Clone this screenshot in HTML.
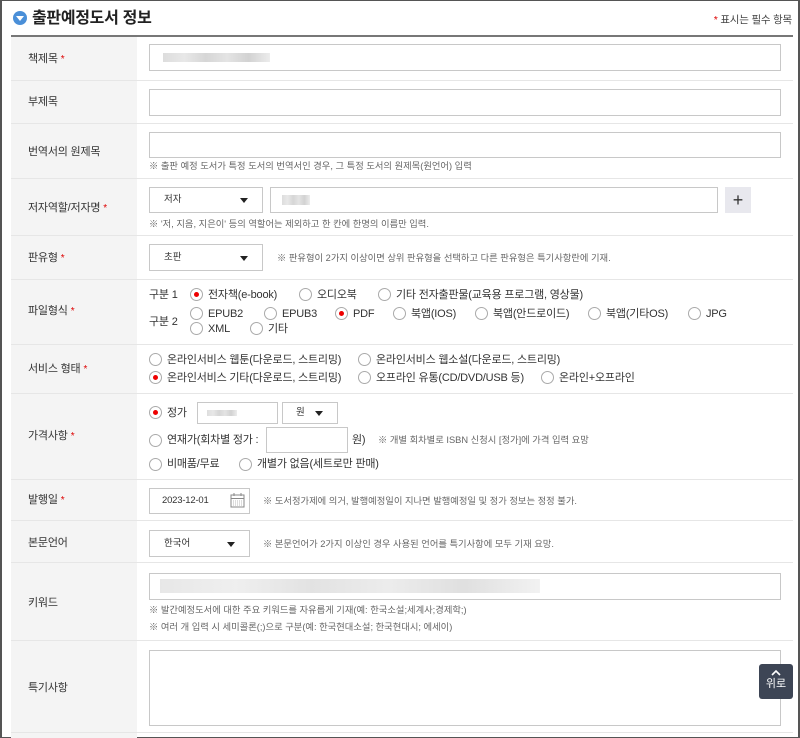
<!DOCTYPE html>
<html><head><meta charset="utf-8"><style>
*{margin:0;padding:0;box-sizing:border-box}
body{width:800px;height:738px;overflow:hidden;background:#fff;font-family:"Liberation Sans","Noto Sans CJK KR",sans-serif;color:#333;position:relative}
.a{position:absolute}
.t{position:absolute;line-height:16px;white-space:nowrap;font-size:11px;letter-spacing:-0.2px;color:#333}
.n{position:absolute;line-height:14px;white-space:nowrap;font-size:9.3px;color:#666}
.lb{position:absolute;left:28px;line-height:16px;font-size:11px;letter-spacing:-0.2px;color:#333;white-space:nowrap}
.lb i{color:#d00;font-style:normal;font-size:10px;margin-left:3px}
.in{position:absolute;border:1px solid #c8c8c8;background:#fff}
.sel{position:absolute;border:1px solid #c8c8c8;background:#fff;font-size:9.5px;line-height:24px;padding-left:14px;color:#333}
.sel:after{content:"";position:absolute;right:14px;top:50%;margin-top:-2px;border-left:4px solid transparent;border-right:4px solid transparent;border-top:5px solid #222}
.r{position:absolute;width:13px;height:13px;border:1px solid #aaa;border-radius:50%;background:#fff}
.r.c:after{content:"";position:absolute;left:3px;top:3px;width:5px;height:5px;border-radius:50%;background:#e00}
.row{position:absolute;left:11px;width:782px;border-bottom:1px solid #e6e6e6}
.blur{position:absolute;background:linear-gradient(90deg,#ddd,#e8e8e8,#d6d6d6,#e4e4e4,#d2d2d2,#ececec);}
</style></head><body>
<div class="a" style="left:0;top:0;width:800px;height:738px;border:1px solid #555;border-left-width:2px;border-right-width:2px"></div>
<div class="a" style="left:13px;top:11px;width:14px;height:14px;border-radius:50%;background:#4a8fd8"></div>
<div class="a" style="left:16px;top:16px;border-left:4px solid transparent;border-right:4px solid transparent;border-top:5px solid #fff"></div>
<div class="t" style="left:32px;top:9px;font-size:16px;line-height:20px;color:#222;font-weight:bold;letter-spacing:-0.3px">출판예정도서 정보</div>
<div class="t" style="right:8px;top:12px;font-size:10.5px;color:#444"><span style="color:#d00">*</span> 표시는 필수 항목</div>
<div class="a" style="left:11px;top:35px;width:782px;height:2px;background:#777"></div>
<div class="a" style="left:11px;top:37px;width:126px;height:701px;background:#f4f4f4"></div>
<div class="row" style="top:37px;height:44px"></div>
<div class="row" style="top:81px;height:43px"></div>
<div class="row" style="top:124px;height:55px"></div>
<div class="row" style="top:179px;height:57px"></div>
<div class="row" style="top:236px;height:44px"></div>
<div class="row" style="top:280px;height:65px"></div>
<div class="row" style="top:345px;height:49px"></div>
<div class="row" style="top:394px;height:86px"></div>
<div class="row" style="top:480px;height:41px"></div>
<div class="row" style="top:521px;height:42px"></div>
<div class="row" style="top:563px;height:78px"></div>
<div class="lb" style="top:51px">책제목<i>*</i></div>
<div class="lb" style="top:94px">부제목</div>
<div class="lb" style="top:144px">번역서의 원제목</div>
<div class="lb" style="top:200px">저자역할/저자명<i>*</i></div>
<div class="lb" style="top:250px">판유형<i>*</i></div>
<div class="lb" style="top:303px">파일형식<i>*</i></div>
<div class="lb" style="top:361px">서비스 형태<i>*</i></div>
<div class="lb" style="top:428px">가격사항<i>*</i></div>
<div class="lb" style="top:492px">발행일<i>*</i></div>
<div class="lb" style="top:535px">본문언어</div>
<div class="lb" style="top:595px">키워드</div>
<div class="lb" style="top:680px">특기사항</div>
<div class="in" style="left:149px;top:44px;width:632px;height:27px"></div>
<div class="blur" style="left:163px;top:53px;width:107px;height:9px"></div>
<div class="in" style="left:149px;top:89px;width:632px;height:27px"></div>
<div class="in" style="left:149px;top:132px;width:632px;height:26px"></div>
<div class="n" style="left:149px;top:159px">※ 출판 예정 도서가 특정 도서의 번역서인 경우, 그 특정 도서의 원제목(원언어) 입력</div>
<div class="sel" style="left:149px;top:187px;width:114px;height:26px">저자</div>
<div class="in" style="left:270px;top:187px;width:448px;height:26px"></div>
<div class="blur" style="left:282px;top:195px;width:28px;height:10px"></div>
<div class="a" style="left:725px;top:187px;width:26px;height:26px;background:#e8e8ee;text-align:center;line-height:26px;font-size:18px;color:#333">+</div>
<div class="n" style="left:149px;top:217px">※ '저, 지음, 지은이' 등의 역할어는 제외하고 한 칸에 한명의 이름만 입력.</div>
<div class="sel" style="left:149px;top:244px;width:114px;height:27px;line-height:25px">초판</div>
<div class="n" style="left:277px;top:251px">※ 판유형이 2가지 이상이면 상위 판유형을 선택하고 다른 판유형은 특기사항란에 기재.</div>
<div class="t" style="left:149px;top:287px">구분 1</div>
<div class="r c" style="left:190px;top:288px"></div><div class="t" style="left:208px;top:287px">전자책(e-book)</div>
<div class="r" style="left:299px;top:288px"></div><div class="t" style="left:317px;top:287px">오디오북</div>
<div class="r" style="left:378px;top:288px"></div><div class="t" style="left:396px;top:287px">기타 전자출판물(교육용 프로그램, 영상물)</div>
<div class="t" style="left:149px;top:314px">구분 2</div>
<div class="r" style="left:190px;top:307px"></div><div class="t" style="left:208px;top:306px">EPUB2</div>
<div class="r" style="left:264px;top:307px"></div><div class="t" style="left:282px;top:306px">EPUB3</div>
<div class="r c" style="left:335px;top:307px"></div><div class="t" style="left:353px;top:306px">PDF</div>
<div class="r" style="left:393px;top:307px"></div><div class="t" style="left:411px;top:306px">북앱(IOS)</div>
<div class="r" style="left:475px;top:307px"></div><div class="t" style="left:493px;top:306px">북앱(안드로이드)</div>
<div class="r" style="left:588px;top:307px"></div><div class="t" style="left:606px;top:306px">북앱(기타OS)</div>
<div class="r" style="left:688px;top:307px"></div><div class="t" style="left:706px;top:306px">JPG</div>
<div class="r" style="left:190px;top:322px"></div><div class="t" style="left:208px;top:321px">XML</div>
<div class="r" style="left:250px;top:322px"></div><div class="t" style="left:268px;top:321px">기타</div>
<div class="r" style="left:149px;top:353px"></div><div class="t" style="left:167px;top:352px">온라인서비스 웹툰(다운로드, 스트리밍)</div>
<div class="r" style="left:358px;top:353px"></div><div class="t" style="left:376px;top:352px">온라인서비스 웹소설(다운로드, 스트리밍)</div>
<div class="r c" style="left:149px;top:371px"></div><div class="t" style="left:167px;top:370px">온라인서비스 기타(다운로드, 스트리밍)</div>
<div class="r" style="left:358px;top:371px"></div><div class="t" style="left:376px;top:370px">오프라인 유통(CD/DVD/USB 등)</div>
<div class="r" style="left:541px;top:371px"></div><div class="t" style="left:559px;top:370px">온라인+오프라인</div>
<div class="r c" style="left:149px;top:406px"></div><div class="t" style="left:167px;top:405px">정가</div>
<div class="in" style="left:197px;top:402px;width:81px;height:22px"></div>
<div class="blur" style="left:207px;top:410px;width:30px;height:6px"></div>
<div class="sel" style="left:282px;top:402px;width:56px;height:22px;line-height:20px;padding-left:13px">원</div>
<div class="r" style="left:149px;top:434px"></div><div class="t" style="left:167px;top:432px">연재가(회차별 정가 :</div>
<div class="in" style="left:266px;top:427px;width:82px;height:26px"></div>
<div class="t" style="left:352px;top:432px">원)</div>
<div class="n" style="left:378px;top:433px">※ 개별 회차별로 ISBN 신청시 [정가]에 가격 입력 요망</div>
<div class="r" style="left:149px;top:458px"></div><div class="t" style="left:167px;top:456px">비매품/무료</div>
<div class="r" style="left:239px;top:458px"></div><div class="t" style="left:257px;top:456px">개별가 없음(세트로만 판매)</div>
<div class="in" style="left:149px;top:488px;width:101px;height:26px"></div>
<div class="t" style="left:162px;top:493px;font-size:9.5px">2023-12-01</div>
<svg class="a" style="left:230px;top:493px" width="15" height="15" viewBox="0 0 15 15"><rect x="1" y="2" width="13" height="12" fill="none" stroke="#888"/><line x1="1" y1="5.5" x2="14" y2="5.5" stroke="#888"/><line x1="4" y1="0" x2="4" y2="3" stroke="#888"/><line x1="11" y1="0" x2="11" y2="3" stroke="#888"/><path d="M3 8h9M3 10h9M3 12h9" stroke="#bbb" stroke-dasharray="1 1"/></svg>
<div class="n" style="left:263px;top:494px">※ 도서정가제에 의거, 발행예정일이 지나면 발행예정일 및 정가 정보는 정정 불가.</div>
<div class="sel" style="left:149px;top:530px;width:101px;height:27px;line-height:25px">한국어</div>
<div class="n" style="left:263px;top:537px">※ 본문언어가 2가지 이상인 경우 사용된 언어를 특기사항에 모두 기재 요망.</div>
<div class="in" style="left:149px;top:573px;width:632px;height:27px"></div>
<div class="blur" style="left:160px;top:579px;width:380px;height:14px;opacity:.7"></div>
<div class="n" style="left:149px;top:603px">※ 발간예정도서에 대한 주요 키워드를 자유롭게 기재(예: 한국소설;세계사;경제학;)</div>
<div class="n" style="left:149px;top:620px">※ 여러 개 입력 시 세미콜론(;)으로 구분(예: 한국현대소설; 한국현대시; 에세이)</div>
<div class="in" style="left:149px;top:650px;width:632px;height:76px"></div>
<div class="a" style="left:11px;top:732px;width:782px;height:1px;background:#e6e6e6"></div>
<div class="a" style="left:759px;top:664px;width:34px;height:35px;background:#3d4555;border-radius:3px;color:#fff;text-align:center">
<svg style="display:block;margin:5px auto 0" width="10" height="7" viewBox="0 0 10 7"><path d="M1 6L5 2L9 6" fill="none" stroke="#fff" stroke-width="1.6"/></svg>
<div style="font-size:11px;line-height:14px;margin-top:1px">위로</div></div>
</body></html>
